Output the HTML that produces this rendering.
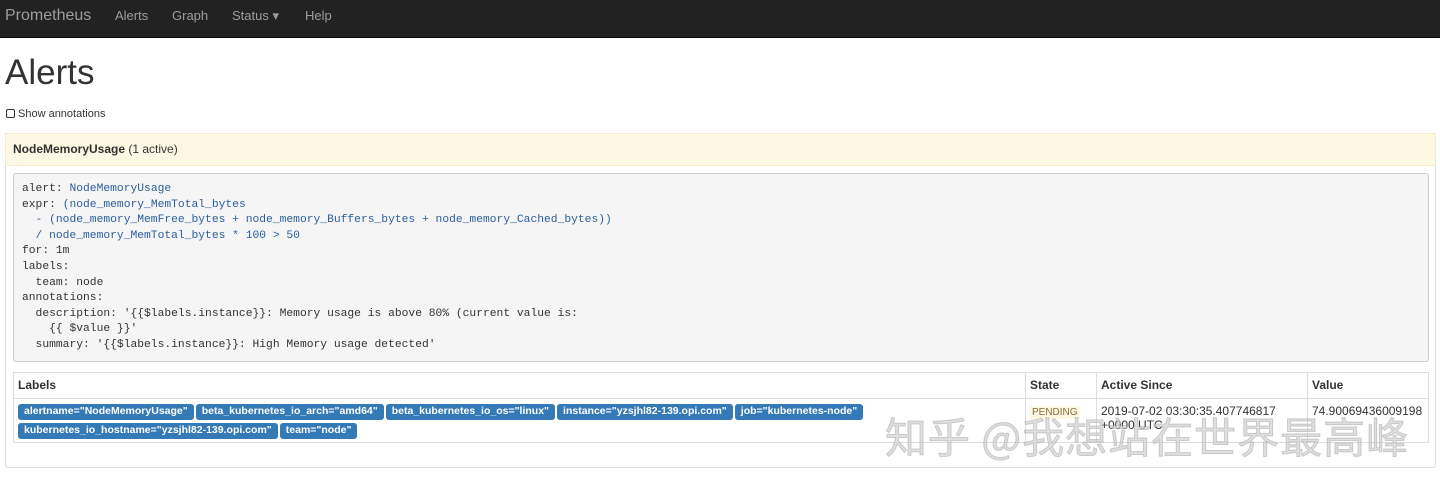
<!DOCTYPE html>
<html><head><meta charset="utf-8"><style>
*{box-sizing:border-box}
body{margin:0;width:1440px;height:489px;background:#fff;font-family:"Liberation Sans",Arial,sans-serif;font-size:13px;color:#333;position:relative;overflow:hidden}
.nav{height:38px;background:#222;border-bottom:1px solid #080808;position:relative}
.nav span{position:absolute;top:0;line-height:32px;color:#9d9d9d;font-size:13px}
h1{position:absolute;left:5px;top:53px;margin:0;font-size:35px;font-weight:500;color:#333}
.cb{position:absolute;left:6px;top:108px;font-size:11px;color:#333}
.cb i{display:inline-block;width:9px;height:9px;border:1.5px solid #333;border-radius:2px;vertical-align:-1px;margin-right:3px}
.panel{position:absolute;left:5px;top:133px;width:1431px;height:335px;border:1px solid #ddd;border-radius:3px}
.ph{position:absolute;left:-1px;top:-1px;width:1431px;height:33px;background:#fcf8e3;border:1px solid #faebcc;padding:8px 7px;font-size:12px}
pre{position:absolute;left:7px;top:39px;width:1416px;height:189px;margin:0;background:#f5f5f5;border:1px solid #ccc;border-radius:3px;padding:8px 8px;font-family:"Liberation Mono",monospace;font-size:11.3px;line-height:15.6px;color:#333}
.b{color:#2a5f9e}
table{position:absolute;left:7px;top:238px;width:1416px;border-collapse:collapse;font-size:12px}
td,th{border:1px solid #ddd;text-align:left;vertical-align:top;padding:5px 4px}
th{height:26px;font-weight:bold}
.l{display:inline-block;background:#337ab7;color:#fff;font-weight:bold;font-size:10.5px;padding:1px 6px 2px;border-radius:3px;margin:0 2px 2px 0;line-height:13px}
.pend{background:#fcf8e3;color:#8a6d3b;font-size:10px;padding:1px 2px}
.wm{position:absolute;left:885px;top:405px;font-family:"Noto Sans CJK SC",sans-serif;font-size:42px;color:rgba(210,210,210,.7);letter-spacing:1px;white-space:nowrap;-webkit-text-stroke:1px rgba(120,120,120,.3)}
</style></head><body>
<div class="nav"><span style="left:5px;font-size:16px">Prometheus</span><span style="left:115px">Alerts</span><span style="left:172px">Graph</span><span style="left:232px">Status ▾</span><span style="left:305px">Help</span></div>
<h1>Alerts</h1>
<div class="cb"><i></i>Show annotations</div>
<div class="panel">
<div class="ph"><b>NodeMemoryUsage</b> (1 active)</div>
<pre>alert: <span class="b">NodeMemoryUsage</span>
expr: <span class="b">(node_memory_MemTotal_bytes
  - (node_memory_MemFree_bytes + node_memory_Buffers_bytes + node_memory_Cached_bytes))
  / node_memory_MemTotal_bytes * 100 &gt; 50</span>
for: 1m
labels:
  team: node
annotations:
  description: '{{$labels.instance}}: Memory usage is above 80% (current value is:
    {{ $value }}'
  summary: '{{$labels.instance}}: High Memory usage detected'</pre>
<table>
<tr><th style="width:1012px">Labels</th><th style="width:71px">State</th><th style="width:211px">Active Since</th><th>Value</th></tr>
<tr style="height:42px"><td style="padding:4px 4px 1px"><span class="l">alertname="NodeMemoryUsage"</span><span class="l">beta_kubernetes_io_arch="amd64"</span><span class="l">beta_kubernetes_io_os="linux"</span><span class="l">instance="yzsjhl82-139.opi.com"</span><span class="l">job="kubernetes-node"</span><br><span class="l">kubernetes_io_hostname="yzsjhl82-139.opi.com"</span><span class="l">team="node"</span></td>
<td><span class="pend">PENDING</span></td><td>2019-07-02 03:30:35.407746817 +0000 UTC</td><td>74.90069436009198</td></tr>
</table>
</div>
<div class="wm">知乎 @我想站在世界最高峰</div>
</body></html>
